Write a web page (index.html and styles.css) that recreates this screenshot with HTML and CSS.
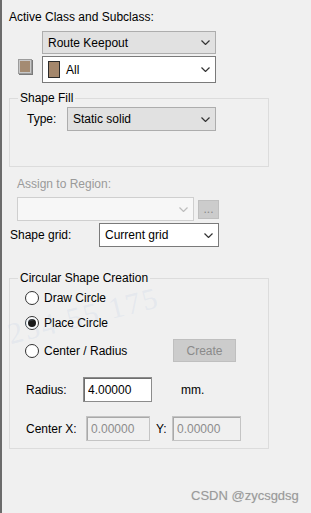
FILE: index.html
```html
<!DOCTYPE html>
<html>
<head>
    <meta charset="UTF-8">
    <title>Circle Options</title>
    <link rel="stylesheet" href="styles.css">
</head>
<body>
    <div class="window">
        <div class="caption">Active Class and Subclass:</div>
        <div class="combo combo-grey class-combo">
            <span class="combo-text">Route Keepout</span>
            <svg class="chevron" width="9" height="5" viewBox="0 0 9 5"><polyline points="0.5,0.5 4.5,4.5 8.5,0.5" fill="none" stroke="#333" stroke-width="1.2"/></svg>
        </div>
        <div class="subclass-row">
            <span class="color-button"><span class="color-fill"></span></span>
            <div class="combo combo-white subclass-combo">
                <span class="swatch"></span>
                <span class="combo-text">All</span>
                <svg class="chevron" width="9" height="5" viewBox="0 0 9 5"><polyline points="0.5,0.5 4.5,4.5 8.5,0.5" fill="none" stroke="#333" stroke-width="1.2"/></svg>
            </div>
        </div>

        <fieldset class="group fill-group">
            <legend>Shape Fill</legend>
            <div class="group-body">
                <div class="form-row">
                    <label class="type-label">Type:</label>
                    <div class="combo combo-grey type-combo">
                        <span class="combo-text">Static solid</span>
                        <svg class="chevron" width="9" height="5" viewBox="0 0 9 5"><polyline points="0.5,0.5 4.5,4.5 8.5,0.5" fill="none" stroke="#333" stroke-width="1.2"/></svg>
                    </div>
                </div>
            </div>
        </fieldset>

        <div class="caption disabled region-caption">Assign to Region:</div>
        <div class="region-row">
            <div class="combo combo-disabled region-combo">
                <span class="combo-text"></span>
                <svg class="chevron" width="9" height="5" viewBox="0 0 9 5"><polyline points="0.5,0.5 4.5,4.5 8.5,0.5" fill="none" stroke="#bdbdbd" stroke-width="1.2"/></svg>
            </div>
            <button class="btn-disabled browse-btn">...</button>
        </div>

        <div class="grid-row">
            <label class="grid-label">Shape grid:</label>
            <div class="combo combo-white grid-combo">
                <span class="combo-text">Current grid</span>
                <svg class="chevron" width="9" height="5" viewBox="0 0 9 5"><polyline points="0.5,0.5 4.5,4.5 8.5,0.5" fill="none" stroke="#333" stroke-width="1.2"/></svg>
            </div>
        </div>

        <fieldset class="group circle-group">
            <legend>Circular Shape Creation</legend>
            <div class="group-body">
                <div class="radio-row">
                    <span class="radio"></span>
                    <span class="radio-label">Draw Circle</span>
                </div>
                <div class="radio-row second">
                    <span class="radio checked"></span>
                    <span class="radio-label">Place Circle</span>
                </div>
                <div class="radio-row third">
                    <span class="radio"></span>
                    <span class="radio-label wide">Center / Radius</span>
                    <button class="btn-disabled create-btn">Create</button>
                </div>
                <div class="value-row radius-row">
                    <label class="radius-label">Radius:</label>
                    <input class="field radius-field" type="text" value="4.00000">
                    <span class="unit">mm.</span>
                </div>
                <div class="value-row center-row">
                    <label class="center-label">Center X:</label>
                    <input class="field field-disabled cx-field" type="text" value="0.00000" disabled>
                    <label class="y-label">Y:</label>
                    <input class="field field-disabled cy-field" type="text" value="0.00000" disabled>
                </div>
            </div>
        </fieldset>

        <div class="watermark">254 55 175</div>
        <div class="credit">CSDN @zycsgdsg</div>
    </div>
</body>
</html>
```

FILE: styles.css
```css
:root {
    --bg: #f0f0f0;
    --text: #000;
    --muted: #9a9a9a;
    --border-light: #adadad;
    --border-dark: #7a7a7a;
    --group-border: #dcdcdc;
}
body {
    margin: 0;
    background-color: var(--bg);
    font-family: "Liberation Sans", Arial, sans-serif;
    font-size: 12px;
    color: var(--text);
    overflow: hidden;
}
.window {
    position: relative;
    height: 513px;
    box-sizing: border-box;
    border-left: 2px solid #6b6b6b;
    padding: 9px 0 0 7px;
}
.caption { line-height: 16px; }
.disabled { color: var(--muted); }

/* combo boxes */
.combo {
    display: flex; align-items: center; box-sizing: border-box;
    border: 1px solid var(--border-light); padding: 0 5px 0 5px;
}
.combo-text { flex-grow: 1; white-space: nowrap; }
.chevron { flex-shrink: 0; }
.combo-grey { background-color: #e1e1e1; }
.combo-white { background-color: #fff; border-color: var(--border-dark); }
.combo-disabled { background-color: #f7f7f7; border-color: #cfcfcf; }

.class-combo { margin: 6px 0 0 33px; width: 174px; height: 23px; }
.subclass-row { display: flex; margin-top: 2px; }
.color-button {
    box-sizing: border-box; width: 14px; height: 15px; margin: 3px 0 0 9px;
    border: 1px solid #9c9c9c; background-color: #c9c9c9; padding: 1px;
    box-shadow: 1px 1px 0 #7a7a7a;
}
.color-fill { display: block; height: 100%; background-color: #a48b72; }
.subclass-combo { margin-left: 10px; width: 174px; height: 27px; padding-left: 5px; }
.swatch {
    box-sizing: border-box; width: 12px; height: 17px; margin-right: 6px;
    background-color: #a4876c; border: 1px solid #2b2b2b;
}

/* group boxes */
.group {
    margin: 0; padding: 0; width: 260px; box-sizing: border-box;
    border: 1px solid var(--group-border);
}
.group legend { margin-left: 8px; padding: 0 2px; line-height: 16px; }
.fill-group { margin-top: 7px; }
.fill-group .group-body { padding: 1px 0 35px 17px; }
.form-row { display: flex; align-items: center; }
.type-label { width: 40px; }
.type-combo { width: 149px; height: 24px; }

.region-caption { margin: 9px 0 0 8px; }
.region-row { display: flex; align-items: center; margin: 5px 0 0 8px; }
.region-combo { width: 177px; height: 24px; }
.btn-disabled {
    font-family: inherit; font-size: 12px; color: #8a8a8a;
    background-color: #cccccc; border: 1px solid #bfbfbf; padding: 0;
}
.browse-btn { margin-left: 4px; width: 21px; height: 19px; line-height: 14px; }

.grid-row { display: flex; align-items: center; margin: 2px 0 0 1px; }
.grid-label { width: 89px; }
.grid-combo { width: 120px; height: 24px; }

.circle-group { margin-top: 23px; }
.circle-group .group-body { padding: 4px 0 7px 15px; }
.radio-row { display: flex; align-items: center; height: 16px; }
.radio-row.second { margin-top: 9px; }
.radio-row.third { margin-top: 8px; height: 23px; }
.radio {
    box-sizing: border-box; width: 14px; height: 14px; border-radius: 50%;
    border: 1px solid #333; background-color: #fff; margin-right: 5px;
    display: flex; align-items: center; justify-content: center;
}
.radio.checked::after {
    content: ""; width: 8px; height: 8px; border-radius: 50%; background-color: #1a1a1a;
}
.radio-label.wide { width: 129px; }
.create-btn { width: 63px; height: 23px; font-size: 12px; }

.value-row { display: flex; align-items: center; padding-left: 1px; }
.radius-row { margin-top: 15px; }
.center-row { margin-top: 14px; }
.radius-label { width: 57px; }
.center-label { width: 60px; }
.field {
    box-sizing: border-box; height: 25px; margin: 0; padding: 0 0 0 4px;
    font-family: inherit; font-size: 12px; color: var(--text);
    background-color: #fff; border: 1px solid #8c8c8c;
    box-shadow: inset 1px 1px 0 #6e6e6e;
}
.radius-field { width: 69px; }
.unit { margin-left: 29px; }
.field-disabled {
    background-color: var(--bg); color: #8c8c8c; border-color: #c4c4c4;
    box-shadow: inset 1px 1px 0 #a9a9a9;
}
.cx-field { width: 64px; }
.y-label { margin-left: 6px; width: 16px; }
.cy-field { width: 69px; }

/* image overlays */
.watermark {
    position: absolute; left: 2px; top: 318px;
    font-family: "Liberation Serif", serif; font-size: 30px; letter-spacing: 2px;
    color: rgba(170, 195, 225, 0.18); transform: rotate(-14deg); transform-origin: left top;
    pointer-events: none;
}
.credit {
    position: absolute; left: 189px; top: 488px;
    font-size: 13px; color: #9a9a9a; text-shadow: 0 0 1px #d0d0d0;
}
```
